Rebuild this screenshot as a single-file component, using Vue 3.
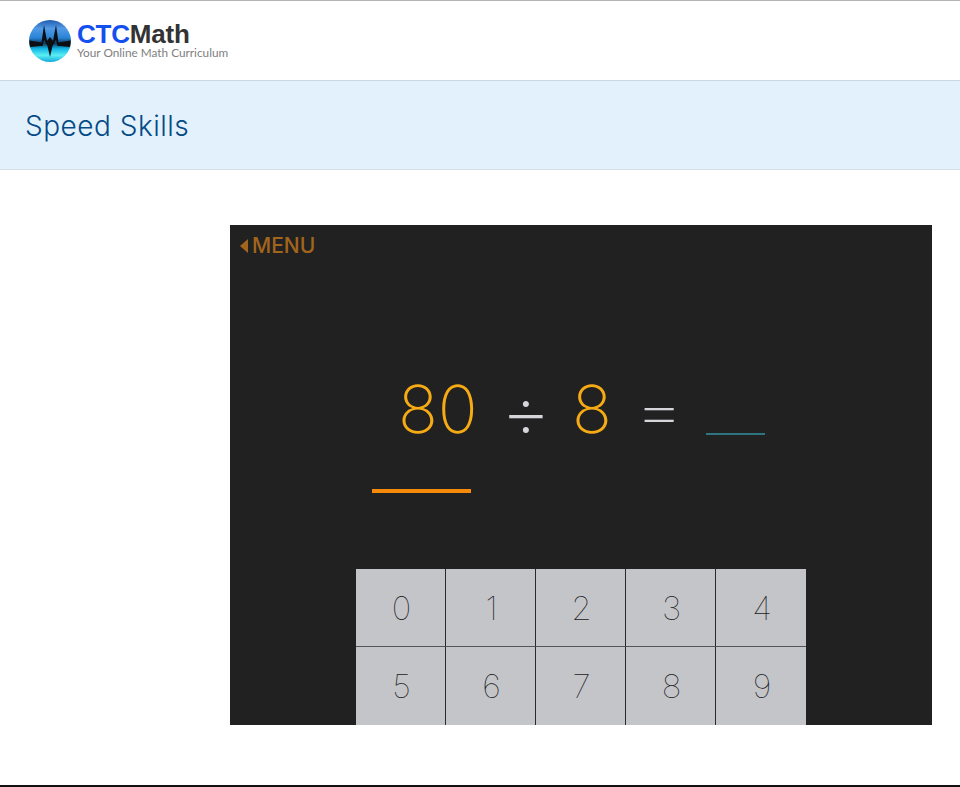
<script setup>
const keys = [0, 1, 2, 3, 4, 5, 6, 7, 8, 9]
</script>

<template>
  <div class="page">
    <header class="top">
      <svg class="globe" width="42" height="42" viewBox="0 0 42 42">
        <defs>
          <linearGradient id="globeFill" x1="0" y1="0" x2="0" y2="1">
            <stop offset="0" stop-color="#1f5cad" />
            <stop offset="0.2" stop-color="#5299e6" />
            <stop offset="0.42" stop-color="#2a84d6" />
            <stop offset="0.56" stop-color="#0b3a5e" />
            <stop offset="0.68" stop-color="#12b4e4" />
            <stop offset="0.84" stop-color="#5aeef4" />
            <stop offset="1" stop-color="#14a8dc" />
          </linearGradient>
        </defs>
        <circle cx="21" cy="21" r="21" fill="url(#globeFill)" />
        <path d="M0.5 20.5 L12.5 22.5 L15 5 L18 21 L21 17 L24 21 L27 5 L29.5 22.5 L41.5 20.5 L41 27 L31 26 L28.5 26 L27 20 L23.5 26 L21 37 L18.5 26 L15 20 L13.5 26 L11 26 L1 27 Z" fill="#0c0e12" />
      </svg>
      <div class="brand">
        <div class="brand-name"><span class="ctc">CTC</span><span class="math">Math</span></div>
        <div class="tagline">Your Online Math Curriculum</div>
      </div>
    </header>

    <section class="band">
      <h1 class="title">Speed Skills</h1>
    </section>

    <main class="content">
      <div class="game">
        <div class="menu"><span class="arrow"></span>MENU</div>
        <div class="equation">
          <span class="num first">80</span>
          <span class="op divide">÷</span>
          <span class="num second">8</span>
          <span class="op equals">=</span>
          <span class="blank"></span>
        </div>
        <div class="timer"></div>
        <div class="keypad">
          <div v-for="k in keys" :key="k" class="key">{{ k }}</div>
        </div>
      </div>
    </main>
  </div>
</template>

<style>
html, body { margin: 0; background: #fff; }
</style>

<style scoped>
.page {
  width: 960px;
  height: 787px;
  box-sizing: border-box;
  border-top: 1px solid #b3b3b3;
  border-bottom: 2px solid #111;
  display: flex;
  flex-direction: column;
  overflow: hidden;
  font-family: "Liberation Sans", sans-serif;
}
.top {
  height: 79px;
  box-sizing: border-box;
  padding: 19px 0 0 29px;
  display: flex;
  gap: 6px;
}
.globe { flex: none; }
.brand { margin-top: 1px; }
.brand-name {
  font-size: 26px;
  line-height: 26px;
  font-weight: 700;
  letter-spacing: -0.2px;
}
.ctc { color: #1450f0; }
.math { color: #333; }
.tagline {
  font-family: "Lato", sans-serif;
  font-size: 11.8px;
  line-height: 12px;
  color: #808080;
}
.band {
  height: 90px;
  box-sizing: border-box;
  background: #e3f1fd;
  border-top: 1px solid #c9d8e4;
  border-bottom: 1px solid #d3dde5;
  display: flex;
  align-items: center;
  padding: 2px 0 0 25px;
}
.title {
  margin: 0;
  font-family: "Inter", sans-serif;
  font-weight: 300;
  font-size: 28px;
  letter-spacing: 0.5px;
  color: #044a85;
}
.content {
  padding: 55px 0 0 230px;
}
.game {
  width: 702px;
  height: 500px;
  background: #212121;
  display: flex;
  flex-direction: column;
  overflow: hidden;
}
.menu {
  display: flex;
  align-items: center;
  gap: 4px;
  padding: 9px 0 0 10px;
  height: 23px;
  font-family: "Inter", sans-serif;
  font-size: 21px;
  font-weight: 500;
  line-height: 23px;
  color: #a3651c;
}
.arrow {
  width: 0;
  height: 0;
  border-top: 7px solid transparent;
  border-bottom: 7px solid transparent;
  border-right: 8px solid #a3651c;
}
.equation {
  margin-top: 117px;
  height: 70px;
  display: flex;
  align-items: center;
  padding-left: 168px;
  font-family: "Inter", sans-serif;
  font-weight: 200;
  font-size: 66px;
  line-height: 70px;
}
.num { color: #f6ab14; }
.op { color: #d5d5da; font-size: 78px; font-weight: 200; margin-top: 4px; }
.divide { margin-left: 23px; }
.second { margin-left: 21px; }
.equals { margin-left: 22px; transform: scaleY(0.72); }
.blank {
  width: 59px;
  height: 2px;
  background: #2f7580;
  margin: 50px 0 0 22px;
}
.timer {
  width: 99px;
  height: 4px;
  margin: 45px 0 0 142px;
  background: #f58a0b;
}
.keypad {
  width: 450px;
  margin: 76px 0 0 126px;
  display: grid;
  grid-template-columns: repeat(5, 90px);
  grid-template-rows: 78px 78px;
  background: #c4c5c9;
}
.key {
  box-sizing: border-box;
  display: flex;
  align-items: center;
  justify-content: center;
  padding-left: 2px;
  font-family: "Inter", sans-serif;
  font-weight: 100;
  font-size: 33px;
  color: #1a1a1a;
  border-right: 1px solid #2a2a2a;
}
.key:nth-child(5n) { border-right: 0; }
.key:nth-child(-n+5) { border-bottom: 1px solid #555; }
</style>
